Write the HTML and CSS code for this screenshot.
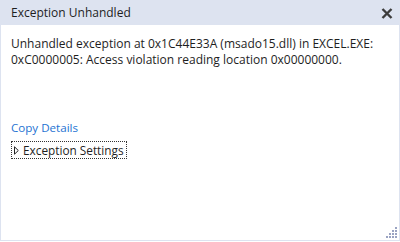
FILE: index.html
```html
<!DOCTYPE html>
<html>
<head>
<meta charset="utf-8">
<link rel="stylesheet" href="styles.css">
</head>
<body>
<div class="window">
  <div class="header">
    <span class="title">Exception Unhandled</span>
    <svg class="close" width="12" height="11" viewBox="0 0 12 11"><path d="M1.5 1 L10.5 10 M10.5 1 L1.5 10" stroke="#3c3c3c" stroke-width="2.4"/></svg>
  </div>
  <div class="body">
    <p class="message">Unhandled exception at 0x1C44E33A (msado15.dll) in EXCEL.EXE: 0xC0000005: Access violation reading location 0x00000000.</p>
    <a class="link">Copy Details</a>
    <div class="settings"><svg class="tri" width="5" height="9" viewBox="0 0 5 9"><path d="M0.5 0.8 L4.3 4.5 L0.5 8.2 Z" fill="none" stroke="#222" stroke-width="1"/></svg><span>Exception Settings</span></div>
    <svg class="grip" width="11" height="11" viewBox="0 0 11 11">
      <g fill="#9aa3c2">
        <rect x="9" y="0" width="2" height="2"/>
        <rect x="9" y="3" width="2" height="2"/><rect x="6" y="3" width="2" height="2"/>
        <rect x="9" y="6" width="2" height="2"/><rect x="6" y="6" width="2" height="2"/><rect x="3" y="6" width="2" height="2"/>
        <rect x="9" y="9" width="2" height="2"/><rect x="6" y="9" width="2" height="2"/><rect x="3" y="9" width="2" height="2"/><rect x="0" y="9" width="2" height="2"/>
      </g>
    </svg>
  </div>
</div>
</body>
</html>
```
FILE: styles.css
```css
html, body { margin: 0; padding: 0; }
body { background: #fff; font-family: "Open Sans", sans-serif; font-size: 12px; color: #1e1e1e; }
.window { width: 400px; height: 241px; box-sizing: border-box; border: 1px solid #dde3f0; border-top: none; display: flex; flex-direction: column; }
.header { height: 25px; background: #dde3f0; display: flex; align-items: center; justify-content: space-between; padding: 0 6px 0 10px; }
.title { font-size: 12px; color: #1e1e1e; }
.close { margin-top: 1px; }
.body { flex: 1; position: relative; padding: 11px 10px 0 10px; }
.message { margin: 0; line-height: 16px; width: 370px; }
.link { display: block; margin-top: 52px; color: #1e73d2; line-height: 16px; font-size: 11.6px; }
.settings { display: inline-flex; align-items: center; gap: 4px; margin-top: 5px; border: 1px dotted #333; padding: 0 2px 0 2px; height: 16px; font-size: 11.8px; }
.grip { position: absolute; right: 2px; bottom: 2px; }
```
